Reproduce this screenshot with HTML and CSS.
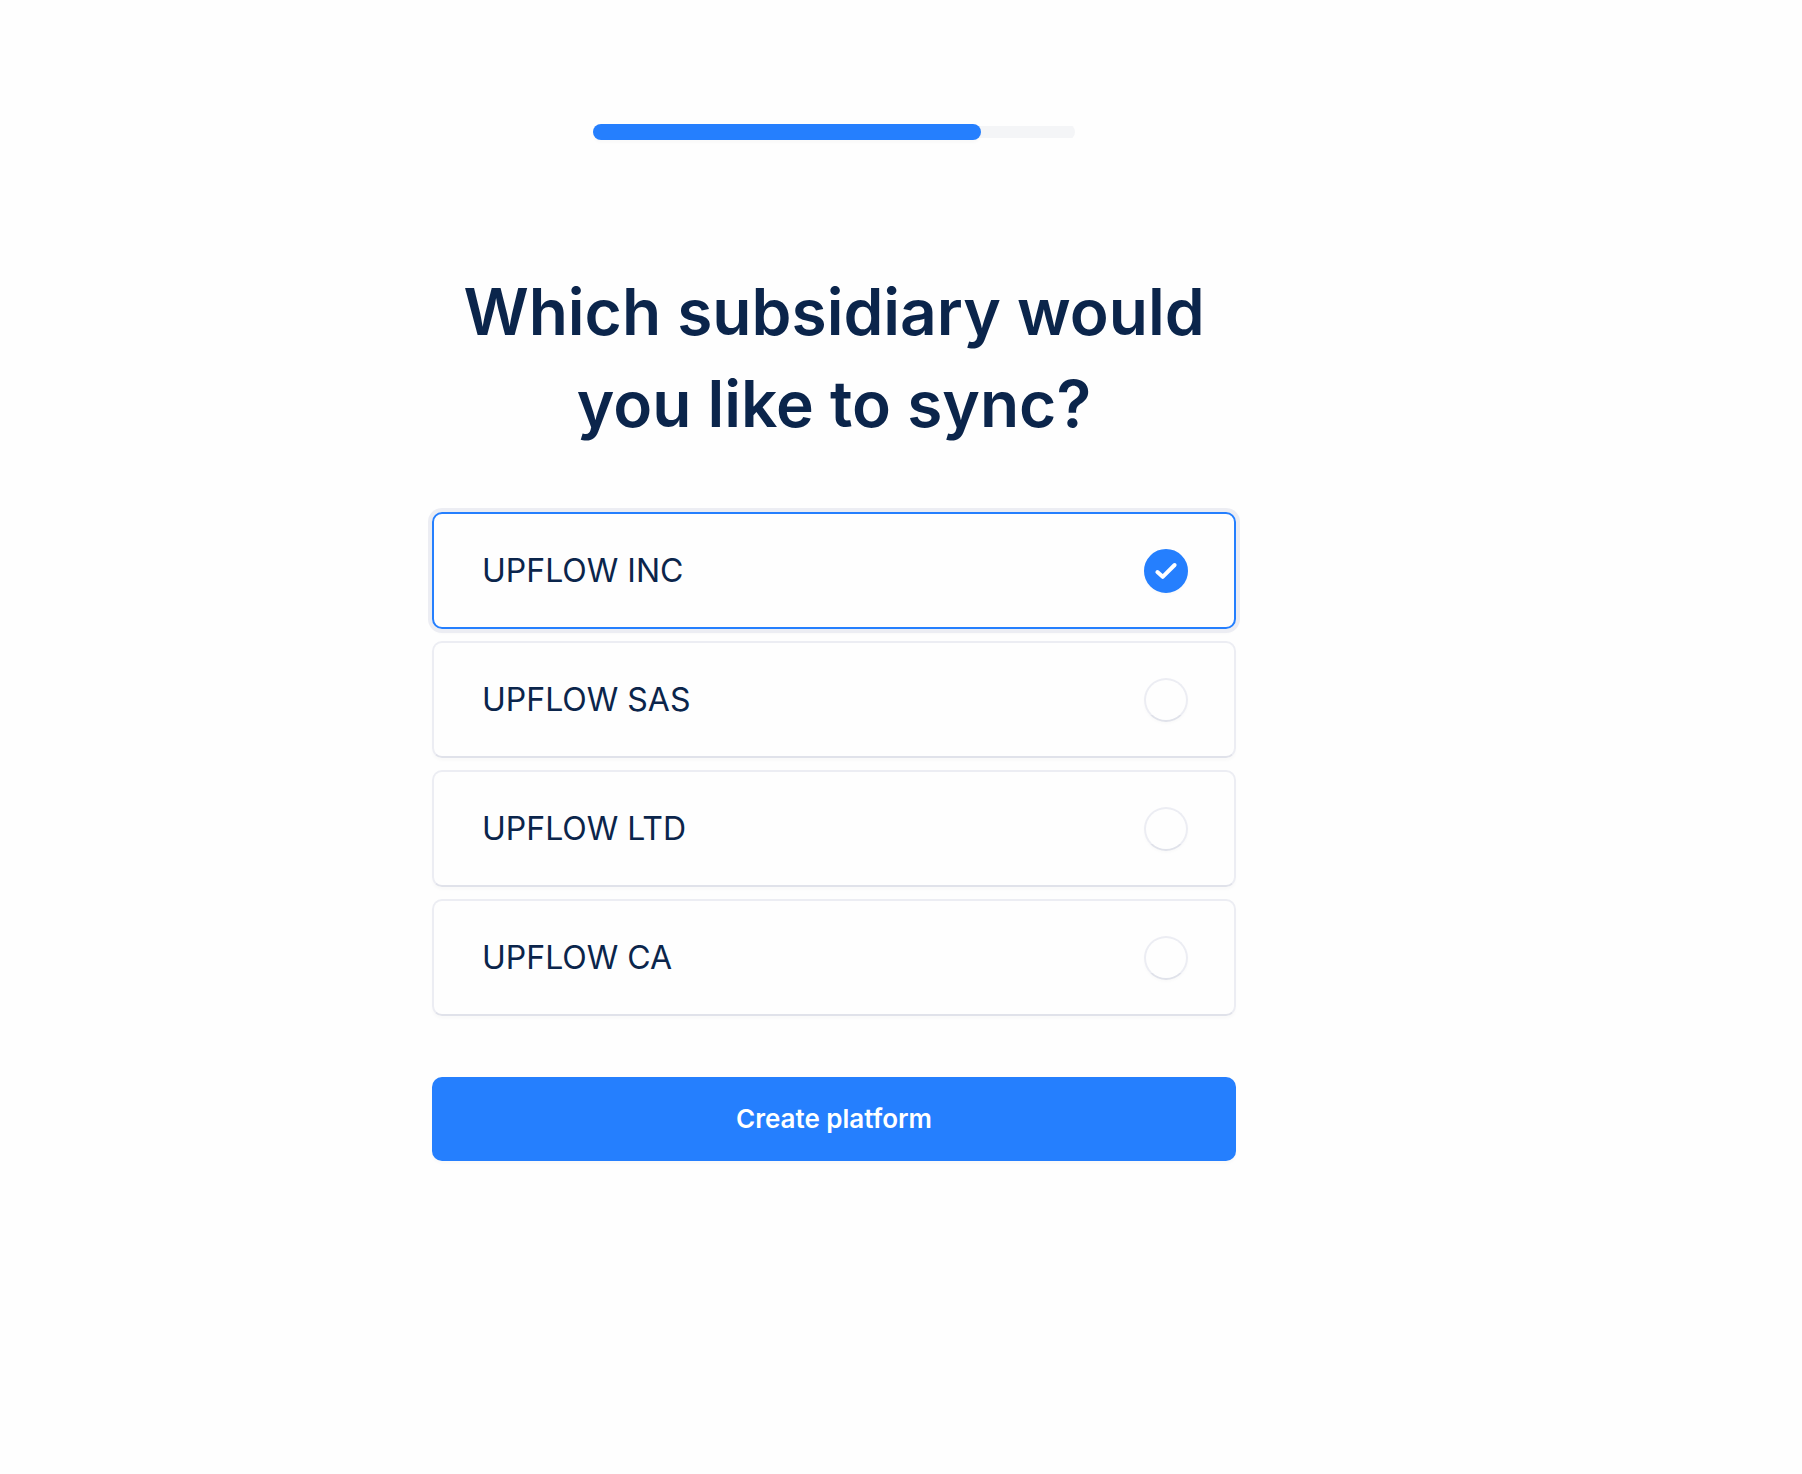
FILE: index.html
```html
<!DOCTYPE html>
<html lang="en">
<head>
  <meta charset="utf-8">
  <meta name="viewport" content="width=device-width, initial-scale=1">
  <title>Which subsidiary would you like to sync?</title>
  <link rel="stylesheet" href="styles.css">
</head>
<body>
  <main class="page">
    <div class="progress" role="progressbar" aria-label="Setup progress" aria-valuemin="0" aria-valuemax="100" aria-valuenow="80">
      <div class="progress-fill" style="width: 80.5%"></div>
    </div>
    <form class="form">
      <h1 class="title" id="title">Which subsidiary would you like to sync?</h1>
      <div class="options" role="radiogroup" aria-labelledby="title">
        <label class="option">
          <span class="option-name">UPFLOW INC</span>
          <span class="mark">
            <input class="radio" type="radio" name="subsidiary" value="inc" checked>
            <svg class="check" viewBox="0 0 44 44" aria-hidden="true"><path d="M13.4 23L18.7 27.8L30.6 16"/></svg>
          </span>
        </label>
        <label class="option">
          <span class="option-name">UPFLOW SAS</span>
          <span class="mark">
            <input class="radio" type="radio" name="subsidiary" value="sas">
            <svg class="check" viewBox="0 0 44 44" aria-hidden="true"><path d="M13.4 23L18.7 27.8L30.6 16"/></svg>
          </span>
        </label>
        <label class="option">
          <span class="option-name">UPFLOW LTD</span>
          <span class="mark">
            <input class="radio" type="radio" name="subsidiary" value="ltd">
            <svg class="check" viewBox="0 0 44 44" aria-hidden="true"><path d="M13.4 23L18.7 27.8L30.6 16"/></svg>
          </span>
        </label>
        <label class="option">
          <span class="option-name">UPFLOW CA</span>
          <span class="mark">
            <input class="radio" type="radio" name="subsidiary" value="ca">
            <svg class="check" viewBox="0 0 44 44" aria-hidden="true"><path d="M13.4 23L18.7 27.8L30.6 16"/></svg>
          </span>
        </label>
      </div>
      <button class="submit" type="button">Create platform</button>
    </form>
  </main>
</body>
</html>
```
FILE: styles.css
```css
:root {
  --blue: #257ffe;
  --navy: #0b254b;
  --line: #ecedf3;
  --line-dark: #e0e2ea;
}

* {
  box-sizing: border-box;
}

body {
  margin: 0;
  background: #fefefe;
  color: var(--navy);
  font-family: Inter, "Liberation Sans", sans-serif;
}

.page {
  display: flex;
  flex-direction: column;
  align-items: center;
  gap: 126px;
  padding: 124px 134px 124px 0;
}

.progress {
  display: flex;
  width: 100%;
  max-width: 482px;
  height: 16px;
  background: linear-gradient(#f4f5f7, #f4f5f7) center / 100% 12px no-repeat;
  border-radius: 8px;
}

.progress-fill {
  background: var(--blue);
  border-radius: 8px;
  box-shadow: 0 3px 3px rgb(11 37 75 / 2%);
}

.form {
  display: flex;
  flex-direction: column;
  width: 100%;
  max-width: 804px;
}

.title {
  margin: 0 0 62px;
  font-size: 64px;
  font-weight: 600;
  line-height: 92px;
  text-align: center;
}

.options {
  display: flex;
  flex-direction: column;
  gap: 12px;
}

.option {
  display: flex;
  align-items: center;
  justify-content: space-between;
  min-height: 117px;
  padding: 0 46px 0 48px;
  border: 2px solid var(--line);
  border-bottom-color: var(--line-dark);
  border-radius: 10px;
  box-shadow: 0 3px 3px rgb(11 37 75 / 2%);
  font-size: 32px;
  line-height: 40px;
  cursor: pointer;
}

.option:has(.radio:checked) {
  border-color: var(--blue);
  box-shadow: 0 0 0 4px var(--line), 0 5px 3px rgb(11 37 75 / 2%);
}

.mark {
  display: grid;
}

.radio,
.check {
  grid-area: 1 / 1;
  width: 44px;
  height: 44px;
  margin: 0;
}

.radio {
  appearance: none;
  border: 2px solid var(--line);
  border-bottom-color: var(--line-dark);
  border-radius: 50%;
  box-shadow: 0 2px 3px rgb(11 37 75 / 2%);
}

.radio:checked {
  background: var(--blue);
  border-color: var(--blue);
}

.check {
  visibility: hidden;
  fill: none;
  stroke: #fff;
  stroke-width: 4;
  stroke-linecap: round;
  stroke-linejoin: round;
  pointer-events: none;
}

.radio:checked + .check {
  visibility: visible;
}

.submit {
  min-height: 84px;
  margin-top: 61px;
  border: 0;
  border-radius: 10px;
  background: var(--blue);
  box-shadow: 0 3px 3px rgb(11 37 75 / 2%);
  color: #fff;
  font: inherit;
  font-size: 26px;
  font-weight: 600;
  line-height: 32px;
  cursor: pointer;
}
```
